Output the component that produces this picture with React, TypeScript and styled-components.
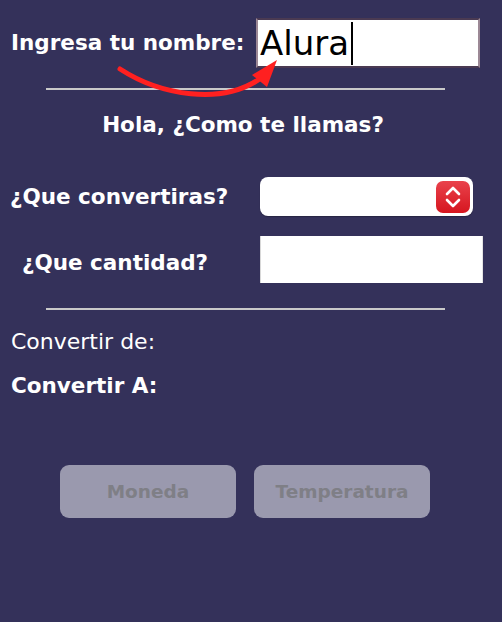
import React from "react";
import styled, { createGlobalStyle } from "styled-components";

const Global = createGlobalStyle`
  html, body { margin: 0; padding: 0; background: #34315a; }
  * { box-sizing: border-box; }
`;

const Frame = styled.div`
  position: relative;
  width: 502px;
  height: 622px;
  background: #34315a;
  font-family: "DejaVu Sans", "Liberation Sans", sans-serif;
  color: #ffffff;
  display: flex;
  flex-direction: column;
  overflow: hidden;
`;

const Row = styled.div<{ $top: number; $labelWidth: number; $padLeft: number }>`
  display: flex;
  align-items: center;
  margin-top: ${(p) => p.$top}px;
  padding-left: ${(p) => p.$padLeft}px;
  & > :first-child {
    width: ${(p) => p.$labelWidth}px;
    flex: none;
  }
`;

const Label = styled.div<{ $shift?: number }>`
  font-size: 21.5px;
  font-weight: 700;
  line-height: 26px;
  white-space: nowrap;
  padding-top: ${(p) => p.$shift ?? 0}px;
`;

const NameField = styled.div`
  width: 224px;
  height: 50px;
  background: #ffffff;
  border-top: 2px solid #4a3a52;
  border-bottom: 2px solid #4a3a52;
  border-left: 2px solid #9c8895;
  border-right: 2px solid #9c8895;
  display: flex;
  align-items: center;
  padding-left: 2px;
  color: #000000;
  font-size: 34px;
  line-height: 40px;
`;

const Caret = styled.span`
  display: inline-block;
  width: 2px;
  height: 43px;
  background: #000000;
  margin-left: 2px;
`;

const Divider = styled.div<{ $top: number }>`
  margin-top: ${(p) => p.$top}px;
  margin-left: 46px;
  width: 399px;
  height: 2px;
  background: #c9c9c9;
  flex: none;
`;

const Heading = styled.div`
  margin-top: 22px;
  width: 398px;
  margin-left: 44px;
  text-align: center;
  font-size: 21.5px;
  font-weight: 700;
  line-height: 26px;
`;

const Select = styled.div`
  width: 213px;
  height: 39px;
  background: #ffffff;
  border-radius: 8px;
  box-shadow: 0 1px 1px rgba(0, 0, 0, 0.25);
  display: flex;
  align-items: center;
  justify-content: flex-end;
  padding-right: 3px;
`;

const SelectButton = styled.div`
  width: 34px;
  height: 32px;
  border-radius: 7px;
  background: linear-gradient(#e9424c, #d6161f);
  display: flex;
  align-items: center;
  justify-content: center;
`;

const AmountField = styled.div`
  width: 223px;
  height: 47px;
  background: #ffffff;
  border-left: 1px solid #d8d8d8;
  border-right: 1px solid #e4e4e4;
`;

const Plain = styled.div<{ $top: number; $bold?: boolean }>`
  margin-top: ${(p) => p.$top}px;
  padding-left: 11px;
  font-size: ${(p) => (p.$bold ? 21.5 : 22)}px;
  font-weight: ${(p) => (p.$bold ? 700 : 400)};
  line-height: 26px;
`;

const Buttons = styled.div`
  margin-top: 66px;
  padding-left: 60px;
  display: flex;
  gap: 18px;
`;

const Button = styled.div`
  width: 176px;
  height: 53px;
  border-radius: 9px;
  background: #9a99ae;
  color: #7f7f86;
  font-size: 18.5px;
  font-weight: 700;
  display: flex;
  align-items: center;
  justify-content: center;
`;

const Overlay = styled.svg`
  position: absolute;
  left: 0;
  top: 0;
  pointer-events: none;
`;

export default function App() {
  return (
    <>
      <Global />
      <Frame>
        <Row $top={18} $labelWidth={245} $padLeft={11}>
          <Label>Ingresa tu nombre:</Label>
          <NameField>
            Alura
            <Caret />
          </NameField>
        </Row>
        <Divider $top={20} />
        <Heading>Hola, ¿Como te llamas?</Heading>
        <Row $top={39} $labelWidth={250} $padLeft={10}>
          <Label>¿Que convertiras?</Label>
          <Select>
            <SelectButton>
              <svg width="20" height="26" viewBox="0 0 20 26">
                <path d="M4 10 L10 4 L16 10" fill="none" stroke="#fff" strokeWidth="2.6" strokeLinecap="round" strokeLinejoin="round" />
                <path d="M4 16 L10 22 L16 16" fill="none" stroke="#fff" strokeWidth="2.6" strokeLinecap="round" strokeLinejoin="round" />
              </svg>
            </SelectButton>
          </Select>
        </Row>
        <Row $top={20} $labelWidth={238} $padLeft={22}>
          <Label $shift={6}>¿Que cantidad?</Label>
          <AmountField />
        </Row>
        <Divider $top={25} />
        <Plain $top={19}>Convertir de:</Plain>
        <Plain $top={18} $bold>
          Convertir A:
        </Plain>
        <Buttons>
          <Button>Moneda</Button>
          <Button>Temperatura</Button>
        </Buttons>
        <Overlay width="502" height="622" viewBox="0 0 502 622">
          <path d="M120 69 C 160 95, 222 106, 261 78" fill="none" stroke="#ff2020" strokeWidth="5" strokeLinecap="round" />
          <polygon points="277,60 252,75 267,87" fill="#ff2020" />
        </Overlay>
      </Frame>
    </>
  );
}
